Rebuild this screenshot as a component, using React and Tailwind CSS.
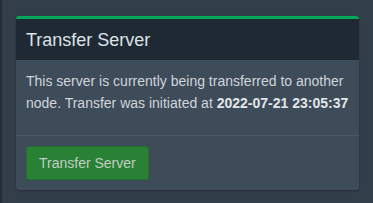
export default function App() {
    return (
        <div className="w-[373px] h-[203px] bg-[#333e4b] flex overflow-hidden" style={{ fontFamily: "'Liberation Sans', Arial, sans-serif" }}>
            {/* left edge strip */}
            <div className="w-[2px] bg-[#252c35] shrink-0" />
            <div className="flex-1 pt-4 pl-[14px] pr-[14px]">
                <div className="bg-[#3e4b59] border-t-[3px] border-[#00a65a] rounded-[3px] shadow-[0_1px_2px_rgba(0,0,0,0.25)]">
                    {/* Header */}
                    <div className="bg-[#1f2933] h-[41px] px-[10px] flex items-center">
                        <h3 className="text-[18px] leading-[20px] text-[#dde2e7]">Transfer Server</h3>
                    </div>

                    {/* Body */}
                    <div className="p-[10px] border-b border-[#4c5867]">
                        <p className="text-[14px] leading-[22px] text-[#cfd5db] mb-[11px]">
                            This server is currently being transferred to another node. Transfer was initiated at <strong className="font-bold text-[#e2e6ea]">2022-07-21 23:05:37</strong>
                        </p>
                    </div>

                    {/* Footer */}
                    <div className="p-[10px]">
                        <button className="h-[34px] px-[12px] bg-[#288134] border border-[#22702d] rounded-[3px] text-[14px] text-[#c3cdc4]">
                            Transfer Server
                        </button>
                    </div>
                </div>
            </div>
        </div>
    );
}
